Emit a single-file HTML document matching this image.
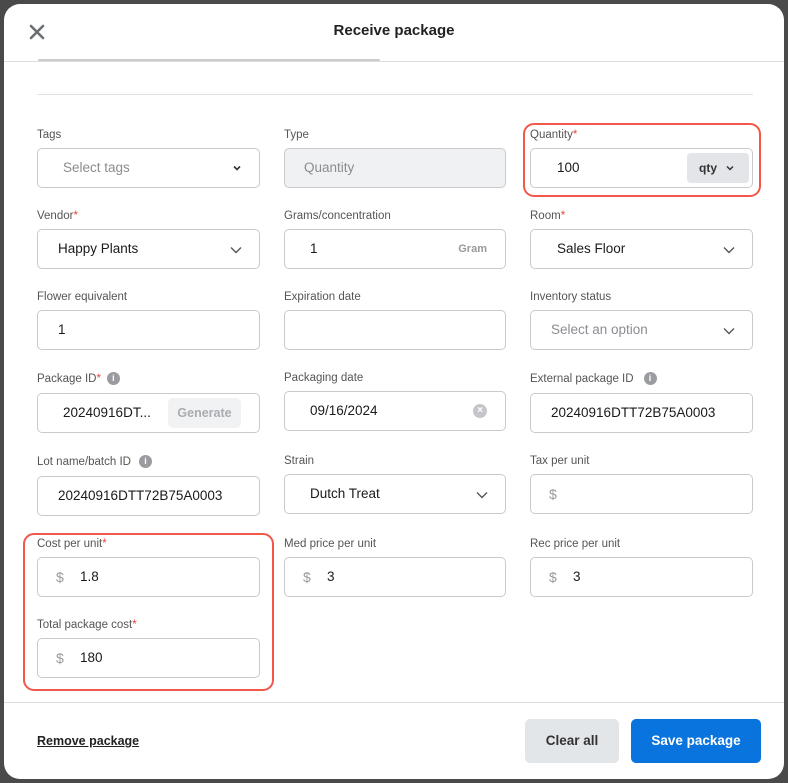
<!DOCTYPE html>
<html><head><style>
*{box-sizing:border-box;margin:0;padding:0}
body{width:788px;height:783px;background:#4a4a4a;font-family:"Liberation Sans",sans-serif;position:relative;overflow:hidden}
.m{position:absolute;left:4px;top:4px;width:780px;height:775px;background:#fff;border-radius:16px}
.a{position:absolute}
.l{position:absolute;font-size:11.5px;color:#555;line-height:14px}
.l b{color:#e5463a;font-weight:normal}
.i{position:absolute;height:40px;border:1px solid #c8cacd;border-radius:5px;font-size:13.5px;color:#1a1a1a;line-height:38px;padding-left:20px;background:#fff}
.ph{color:#8a8d91}
.chev{position:absolute;right:16px;top:13px}
.d{position:absolute;left:18px;color:#999;font-size:14px}
.info{display:inline-block;width:13px;height:13px;border-radius:50%;background:#9a9ca0;color:#fff;font-size:9px;line-height:13px;text-align:center;font-weight:bold;margin-left:6px;vertical-align:1px}
.r{position:absolute;border:2.5px solid #f2574a;border-radius:11px}
</style></head><body>
<div class="m">
<svg class="a" style="left:25px;top:20px" width="16" height="16" viewBox="0 0 16 16"><path d="M2 2L14 14M14 2L2 14" stroke="#6b6f75" stroke-width="2.6" stroke-linecap="round"/></svg>
<div class="a" style="left:0;width:780px;top:18px;text-align:center;font-size:15px;font-weight:bold;color:#222">Receive package</div>
<div class="a" style="left:0;top:57px;width:780px;border-top:1px solid #ddd"></div>
<div class="a" style="left:34px;top:55px;width:342px;height:2px;background:#ccc;border-radius:2px"></div>
<div class="a" style="left:33px;top:90px;width:716px;border-top:1px solid #e2e2e2"></div>
</div>

<div class="r" style="left:523px;top:123px;width:238px;height:74px"></div>
<div class="r" style="left:23px;top:533px;width:251px;height:158px"></div>

<!-- row1 -->
<div class="l" style="left:37px;top:128px">Tags</div>
<div class="i ph" style="left:37px;top:148px;width:223px;padding-left:25px">Select tags<svg class="chev" width="12" height="12" viewBox="0 0 12 12"><path d="M3 4.5L6 7.5L9 4.5" stroke="#333" stroke-width="1.6" fill="none"/></svg></div>
<div class="l" style="left:284px;top:128px">Type</div>
<div class="i ph" style="left:284px;top:148px;width:222px;background:#f0f1f2;padding-left:19px">Quantity</div>
<div class="l" style="left:530px;top:128px">Quantity<b>*</b></div>
<div class="i" style="left:530px;top:148px;width:223px;padding-left:26px">100<div class="a" style="left:156px;top:4px;width:62px;height:30px;background:#e3e5e8;border-radius:4px;font-weight:bold;font-size:12px;line-height:30px;padding-left:12px;color:#333">qty<svg class="a" style="left:38px;top:10px" width="10" height="10" viewBox="0 0 10 10"><path d="M2 3.5L5 6.5L8 3.5" stroke="#333" stroke-width="1.5" fill="none"/></svg></div></div>
<!-- row2 -->
<div class="l" style="left:37px;top:209px">Vendor<b>*</b></div>
<div class="i" style="left:37px;top:229px;width:223px">Happy Plants<svg class="chev" width="14" height="14" viewBox="0 0 14 14"><path d="M2 4.5L7 9.5L12 4.5" stroke="#555" stroke-width="1.4" fill="none"/></svg></div>
<div class="l" style="left:284px;top:209px">Grams/concentration</div>
<div class="i" style="left:284px;top:229px;width:222px;padding-left:25px">1<span class="a" style="right:18px;top:0;font-size:11px;color:#999;font-weight:bold">Gram</span></div>
<div class="l" style="left:530px;top:209px">Room<b>*</b></div>
<div class="i" style="left:530px;top:229px;width:223px;padding-left:26px">Sales Floor<svg class="chev" width="14" height="14" viewBox="0 0 14 14"><path d="M2 4.5L7 9.5L12 4.5" stroke="#555" stroke-width="1.4" fill="none"/></svg></div>
<!-- row3 -->
<div class="l" style="left:37px;top:290px">Flower equivalent</div>
<div class="i" style="left:37px;top:310px;width:223px">1</div>
<div class="l" style="left:284px;top:290px">Expiration date</div>
<div class="i" style="left:284px;top:310px;width:222px"></div>
<div class="l" style="left:530px;top:290px">Inventory status</div>
<div class="i ph" style="left:530px;top:310px;width:223px">Select an option<svg class="chev" width="14" height="14" viewBox="0 0 14 14"><path d="M2 4.5L7 9.5L12 4.5" stroke="#555" stroke-width="1.4" fill="none"/></svg></div>
<!-- row4 -->
<div class="l" style="left:37px;top:372px">Package ID<b>*</b><span class="info">i</span></div>
<div class="i" style="left:37px;top:393px;width:223px;padding-left:25px">20240916DT...<div class="a" style="left:130px;top:4px;width:73px;height:30px;background:#f1f2f3;border-radius:5px;color:#a9acb0;font-weight:bold;font-size:12.5px;line-height:30px;text-align:center">Generate</div></div>
<div class="l" style="left:284px;top:371px">Packaging date</div>
<div class="i" style="left:284px;top:391px;width:222px;padding-left:25px">09/16/2024<span class="a" style="right:18px;top:12px;width:14px;height:14px;border-radius:50%;background:#c4c6c9;color:#fff;font-size:10px;line-height:14px;text-align:center;font-weight:bold">×</span></div>
<div class="l" style="left:530px;top:372px">External package ID<span class="info" style="margin-left:10px">i</span></div>
<div class="i" style="left:530px;top:393px;width:223px">20240916DTT72B75A0003</div>
<!-- row5 -->
<div class="l" style="left:37px;top:455px">Lot name/batch ID<span class="info" style="margin-left:8px">i</span></div>
<div class="i" style="left:37px;top:476px;width:223px">20240916DTT72B75A0003</div>
<div class="l" style="left:284px;top:454px">Strain</div>
<div class="i" style="left:284px;top:474px;width:222px;padding-left:25px">Dutch Treat<svg class="chev" width="14" height="14" viewBox="0 0 14 14"><path d="M2 4.5L7 9.5L12 4.5" stroke="#555" stroke-width="1.4" fill="none"/></svg></div>
<div class="l" style="left:530px;top:454px">Tax per unit</div>
<div class="i" style="left:530px;top:474px;width:223px"><span class="d">$</span></div>
<!-- row6 -->
<div class="l" style="left:37px;top:537px">Cost per unit<b>*</b></div>
<div class="i" style="left:37px;top:557px;width:223px;padding-left:42px"><span class="d">$</span>1.8</div>
<div class="l" style="left:284px;top:537px">Med price per unit</div>
<div class="i" style="left:284px;top:557px;width:222px;padding-left:42px"><span class="d">$</span>3</div>
<div class="l" style="left:530px;top:537px">Rec price per unit</div>
<div class="i" style="left:530px;top:557px;width:223px;padding-left:42px"><span class="d">$</span>3</div>
<!-- row7 -->
<div class="l" style="left:37px;top:618px">Total package cost<b>*</b></div>
<div class="i" style="left:37px;top:638px;width:223px;padding-left:42px"><span class="d">$</span>180</div>

<div class="a" style="left:4px;top:702px;width:780px;border-top:1px solid #ddd"></div>
<div class="a" style="left:37px;top:734px;font-size:12.5px;font-weight:bold;color:#222;text-decoration:underline">Remove package</div>
<div class="a" style="left:525px;top:719px;width:94px;height:44px;background:#e3e6e9;border-radius:5px;font-size:13.5px;font-weight:bold;color:#333;line-height:44px;text-align:center">Clear all</div>
<div class="a" style="left:631px;top:719px;width:130px;height:44px;background:#0a74de;border-radius:5px;font-size:13.5px;font-weight:bold;color:#fff;line-height:44px;text-align:center">Save package</div>
</body></html>
